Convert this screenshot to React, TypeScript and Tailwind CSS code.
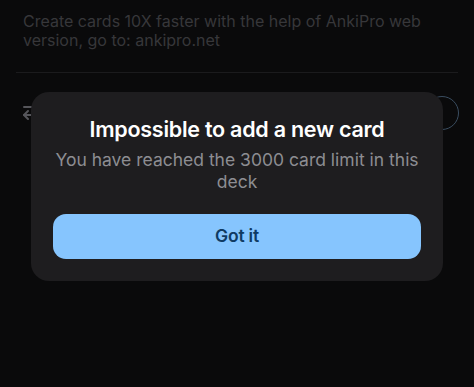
import { useState } from "react";

function BackIcon() {
    return (
        <svg width="12" height="16" viewBox="0 0 12 16" fill="none" stroke="#55555a" strokeWidth="2" strokeLinecap="round" strokeLinejoin="round">
            <line x1="2" y1="2" x2="10" y2="2" />
            <line x1="2" y1="10" x2="11" y2="10" />
            <polyline points="6,6 2,10 6,14" />
        </svg>
    );
}

export default function App() {
    const [open, setOpen] = useState(true);

    return (
        <div className="relative w-[474px] h-[387px] overflow-hidden bg-[#0a0a0b] font-['Inter','Noto_Sans',sans-serif]">
            {/* Page behind the dialog */}
            <div className="px-4 pt-[12px]">
                <p className="px-[7px] text-[16px] leading-[19px] text-[#37373a]">
                    Create cards 10X faster with the help of AnkiPro web version, go to: ankipro.net
                </p>
                <div className="mt-[22px] h-px bg-[#1b1b1d]" />
                <div className="mt-[23px] flex items-center justify-between pl-[6px] pr-0">
                    <BackIcon />
                    <div className="w-[34px] h-[34px] rounded-full border-[1.5px] border-[#3a4d60] -mr-[1px]" />
                </div>
            </div>

            {/* Dialog */}
            {open && (
                <div className="absolute inset-0 flex justify-center pt-[92px]">
                    <div className="w-[412px] h-[189px] rounded-[18px] bg-[#1e1d1f] px-[22px] pt-[23px] flex flex-col items-center">
                        <h2 className="text-[21.5px] leading-[28px] font-semibold text-white tracking-[-0.25px]">
                            Impossible to add a new card
                        </h2>
                        <p className="mt-[6px] text-[17.5px] leading-[22px] text-[#8d8d92] text-center">
                            You have reached the 3000 card limit in this deck
                        </p>
                        <button
                            onClick={() => setOpen(false)}
                            className="mt-[21px] w-[368px] h-[45px] rounded-[13px] bg-[#86c5fe] text-[#0f3b63] text-[17.5px] font-semibold tracking-[-0.2px]"
                        >
                            Got it
                        </button>
                    </div>
                </div>
            )}
        </div>
    );
}
